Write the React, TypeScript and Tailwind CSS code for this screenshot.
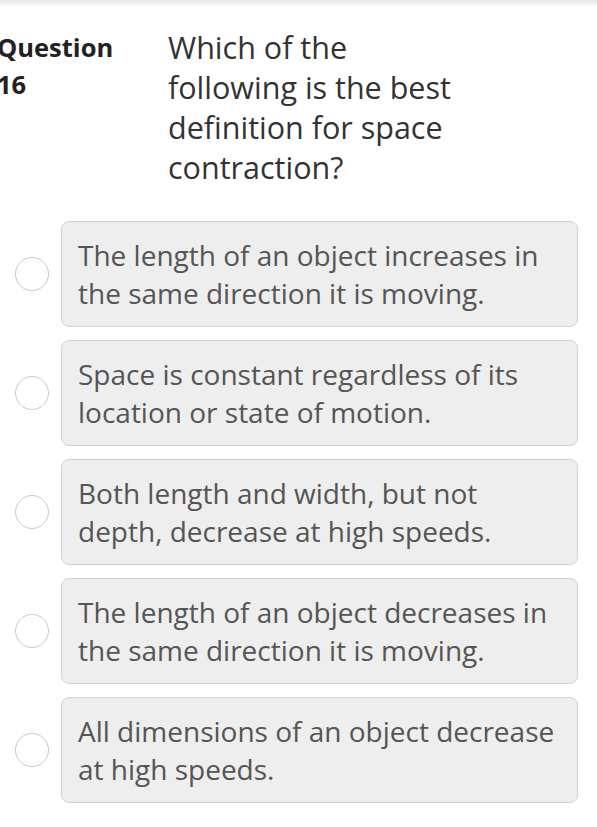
const options = [
  "The length of an object increases in the same direction it is moving.",
  "Space is constant regardless of its location or state of motion.",
  "Both length and width, but not depth, decrease at high speeds.",
  "The length of an object decreases in the same direction it is moving.",
  "All dimensions of an object decrease at high speeds.",
];

const App = () => {
  return (
    <div className="w-[597px] h-[827px] bg-white overflow-hidden font-['Open_Sans',sans-serif]">
      <div className="h-[7px] bg-gradient-to-b from-[#e2e5e8] to-white" />

      <div className="flex pt-[20px]">
        <div className="w-[171px] ml-[-3px] text-[25.5px] font-bold leading-[37px] text-[#222] pt-[2px]">
          Question
          <br />
          16
        </div>
        <p className="w-[312px] text-[30.5px] leading-[40px] text-[#333]">
          Which of the following is the best definition for space contraction?
        </p>
      </div>

      <div className="flex flex-col gap-[13px] mt-[34px] pl-[15px] pr-[19px]">
        {options.map((text, i) => (
          <div key={i} className="flex items-center gap-[12px]">
            <div className="w-[34px] h-[34px] shrink-0 rounded-full border-[1.5px] border-[#c9c9c9] bg-white" />
            <div className="flex-1 h-[106px] flex items-center rounded-[8px] border border-[#d2d2d2] bg-[#eeeeee] pl-[16px] pr-[10px]">
              <p className="text-[28px] leading-[38px] text-[#555]">{text}</p>
            </div>
          </div>
        ))}
      </div>
    </div>
  );
};

export default App;
